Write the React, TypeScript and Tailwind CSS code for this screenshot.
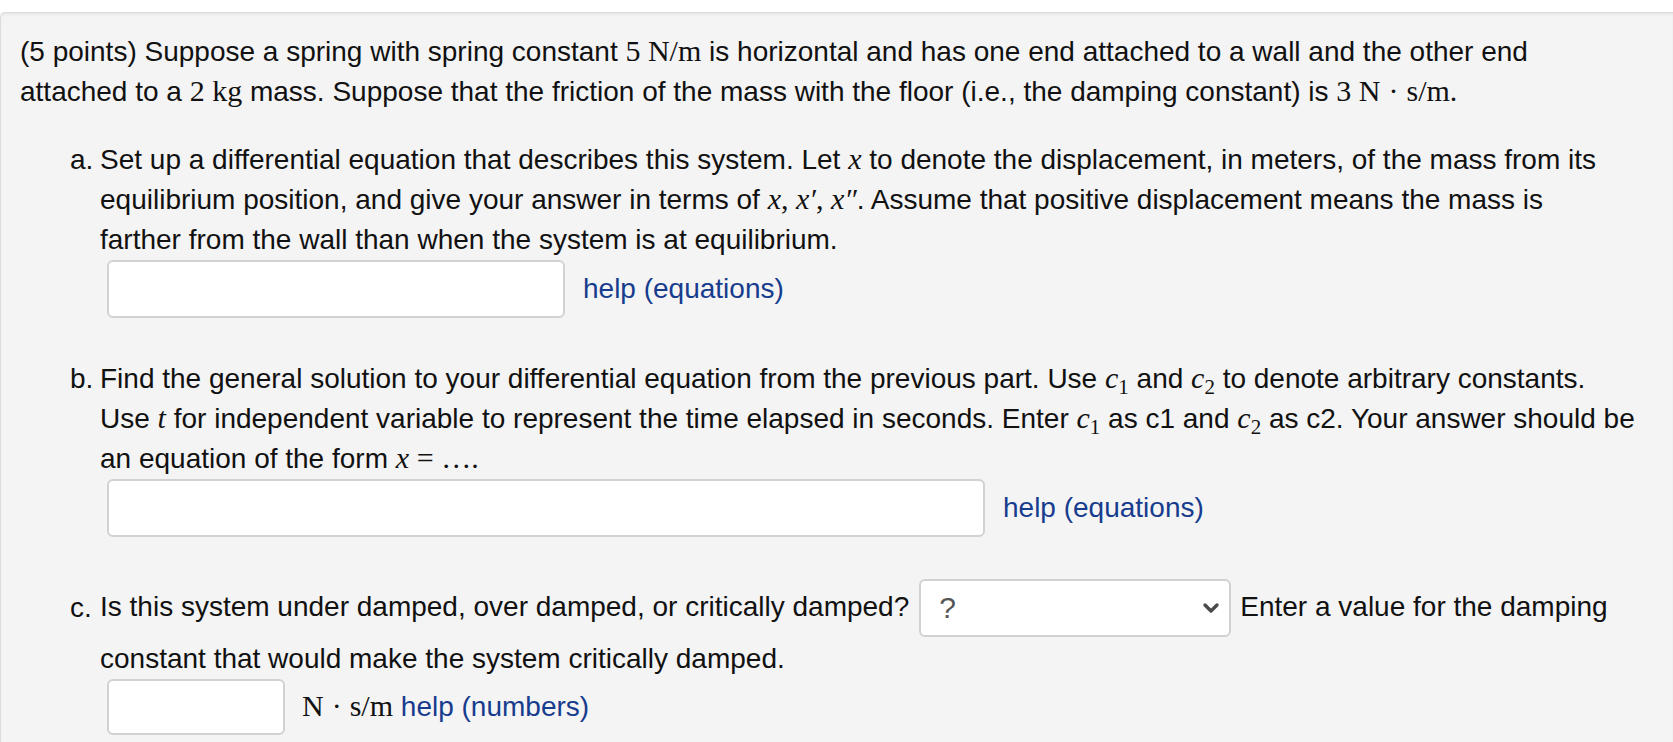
import React from "react";

const Mth: React.FC<{ children: React.ReactNode }> = ({ children }) => (
  <span className="font-['Liberation_Serif','DejaVu_Serif',serif] text-[30px] leading-none">{children}</span>
);

const V: React.FC<{ children: React.ReactNode }> = ({ children }) => (
  <span className="font-['Liberation_Serif','DejaVu_Serif',serif] text-[30px] italic leading-none">{children}</span>
);

const C: React.FC<{ n: string }> = ({ n }) => (
  <span className="font-['Liberation_Serif','DejaVu_Serif',serif] text-[30px] leading-none">
    <i>c</i>
    <span className="relative top-[6px] text-[21px] leading-none">{n}</span>
  </span>
);

// unit N·s/m, spaced like the math renderer does
const Nsm: React.FC<{ dot?: boolean }> = ({ dot }) => (
  <Mth>
    N<span className="mx-[8px]">·</span>s/m{dot ? "." : ""}
  </Mth>
);

const Help: React.FC<{ children: React.ReactNode }> = ({ children }) => (
  <a href="#" className="text-[#173c8e] no-underline">
    {children}
  </a>
);

const Item: React.FC<{ mark: string; markClass?: string; className?: string; children: React.ReactNode }> = ({
  mark,
  markClass,
  className,
  children,
}) => (
  <li className={"flex " + (className ?? "")}>
    <span className={"w-[30px] shrink-0 " + (markClass ?? "")}>{mark}</span>
    <div className="flex-1">{children}</div>
  </li>
);

export default function App() {
  return (
    <div className="min-h-screen bg-white pt-[12px] font-['Liberation_Sans',Arial,sans-serif] text-[28px] leading-[40px] text-[#111]">
      <div className="min-h-[730px] bg-[#f4f4f4] border-l border-t border-[#dcdcdc] rounded-tl-[5px] shadow-[inset_0_2px_2px_rgba(0,0,0,0.05)] pt-[19px] pl-[19px] pr-[10px]">
        <p className="whitespace-nowrap">
          (5 points) Suppose a spring with spring constant <Mth>5 N/m</Mth> is horizontal and has one end attached to a wall and the other end
          <br />
          attached to a <Mth>2 kg</Mth> mass. Suppose that the friction of the mass with the floor (i.e., the damping constant) is{" "}
          <Mth>3 </Mth>
          <Nsm dot />
        </p>

        <ol className="mt-[28px] ml-[50px] whitespace-nowrap">
          <Item mark="a.">
            <p>
              Set up a differential equation that describes this system. Let <V>x</V> to denote the displacement, in meters, of the mass from its
              <br />
              equilibrium position, and give your answer in terms of <V>x</V>
              <Mth>, </Mth>
              <V>x′</V>
              <Mth>, </Mth>
              <V>x″</V>. Assume that positive displacement means the mass is
              <br />
              farther from the wall than when the system is at equilibrium.
            </p>
            <div className="flex items-center">
              <input className="ml-[7px] h-[58px] w-[458px] rounded-[6px] border-2 border-[#d2d2d2] bg-white" />
              <span className="ml-[18px]">
                <Help>help (equations)</Help>
              </span>
            </div>
          </Item>

          <Item mark="b." className="mt-[41px]">
            <p>
              Find the general solution to your differential equation from the previous part. Use <C n="1" /> and <C n="2" /> to denote arbitrary constants.
              <br />
              Use <V>t</V> for independent variable to represent the time elapsed in seconds. Enter <C n="1" /> as c1 and <C n="2" /> as c2. Your answer should be
              <br />
              an equation of the form <V>x</V> <Mth>= ….</Mth>
            </p>
            <div className="flex items-center">
              <input className="ml-[7px] h-[58px] w-[878px] rounded-[6px] border-2 border-[#d2d2d2] bg-white" />
              <span className="ml-[18px]">
                <Help>help (equations)</Help>
              </span>
            </div>
          </Item>

          <Item mark="c." markClass="mt-[12px]" className="mt-[39px]">
            <div className="flex h-[61px] items-center">
              <span>Is this system under damped, over damped, or critically damped?</span>
              <div className="ml-[10px] mr-[9px] mt-[3px] flex h-[58px] w-[312px] shrink-0 items-center justify-between rounded-[6px] border-2 border-[#d2d2d2] bg-white pl-[18px] pr-[9px]">
                <span className="text-[30px] text-[#555]">?</span>
                <svg width="18" height="12" viewBox="0 0 18 12">
                  <path d="M3 3 L9 9 L15 3" fill="none" stroke="#4a4a4a" strokeWidth="3.4" strokeLinecap="round" strokeLinejoin="round" />
                </svg>
              </div>
              <span>Enter a value for the damping</span>
            </div>
            <p className="mt-[2px]">constant that would make the system critically damped.</p>
            <div className="flex items-center">
              <input className="ml-[7px] h-[56px] w-[178px] rounded-[6px] border-2 border-[#d2d2d2] bg-white" />
              <span className="ml-[17px]">
                <Nsm /> <Help>help (numbers)</Help>
              </span>
            </div>
          </Item>
        </ol>
      </div>
    </div>
  );
}
